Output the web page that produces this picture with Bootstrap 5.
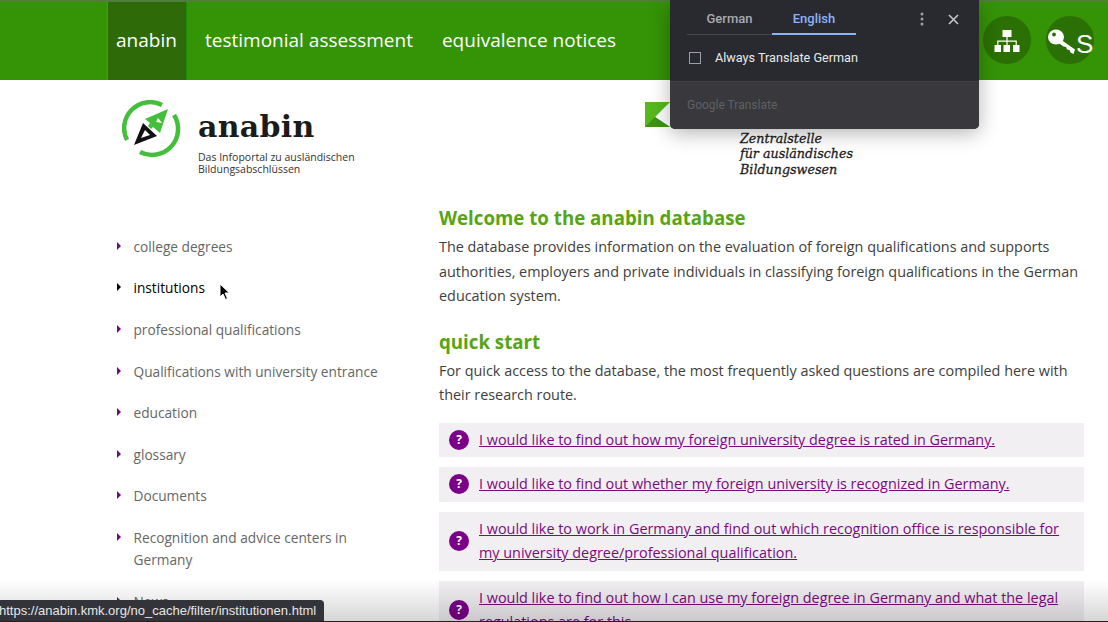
<!DOCTYPE html>
<html lang="en">
<head>
  <meta charset="UTF-8">
  <title>anabin</title>
  <link href="https://cdn.jsdelivr.net/npm/bootstrap@5.3.3/dist/css/bootstrap.min.css" rel="stylesheet">
  <style>
    html, body { height: 622px; overflow: hidden; }
    body { font-family: "Open Sans", sans-serif; font-size: 14.4px; color: #404040; position: relative; }

    .top-bar { height: 80px; background: #359306; border-top: 2px solid #4f7f3a; padding-left: 107px; }
    .top-link { color: #fff; font-size: 19px; text-decoration: none; padding: 0 9px 2px; height: 78px; display: flex; align-items: center; margin-right: 11px; }
    .top-link.active-link { background: #2f6a08; border-left: 1px solid #4c9a22; border-right: 1px solid #1f8a10; width: 80px; margin-right: 9px; padding: 0 8px 2px; }
    .round-btn { width: 48px; height: 48px; border-radius: 50%; background: #2b7005; }
    .round-wrap { position: absolute; top: 16px; left: 983px; gap: 15px; }
    .tree-icon { margin-top: 2px; }
    .key-icon { overflow: visible; }

    .logo-row { height: 126px; padding-left: 122px; }
    .compass-logo { margin: 20px 16px 0 0; flex: none; }
    .logo-words { margin-top: 32px; }
    .anabin-word { font-family: "DejaVu Serif", serif; font-weight: 700; font-size: 30px; line-height: 30px; color: #1b1b1b; letter-spacing: .3px; }
    .anabin-sub { font-size: 10.5px; line-height: 12px; color: #333; margin-top: 9px; }
    .kmk-logo { position: absolute; left: 645px; top: 102px; }
    .kmk-text { position: absolute; left: 740px; top: 130.5px; font-family: "DejaVu Serif", serif; font-style: italic; font-size: 12.7px; line-height: 15.8px; color: #1c1c1c; white-space: nowrap; -webkit-text-stroke: .3px #1c1c1c; }

    .page-body { padding-left: 117px; padding-right: 24px; }
    .side-col { width: 322px; flex: none; padding-top: 29.9px; }
    .side-item { display: flex; margin-bottom: 19.6px; line-height: 22px; font-size: 13.7px; color: #666; padding-right: 35px; }
    .side-arrow { width: 0; height: 0; flex: none; margin: 6px 12.500px 0 0; border-left: 4px solid #6b0d78; border-top: 4px solid transparent; border-bottom: 4px solid transparent; }
    .side-item.is-hover { color: #000; }
    .side-item.is-hover .side-arrow { border-left-color: #000; }

    .main-col { flex: 1; min-width: 0; }
    .main-col h2 { color: #56a513; font-size: 18.7px; font-weight: 700; line-height: 24px; margin: 0 0 5px; }
    .main-col p { line-height: 24.5px; margin: 0; }
    .main-col h2.quick-title { margin: 21px 0 5px; }
    .ask-row { background: #f1eff2; padding: 5px 10px; margin-top: 10px; line-height: 24.5px; gap: 10px; }
    .ask-row.ask-first { margin-top: 15px; }
    .ask-row a { color: #7b0a80; }
    .ask-mark { width: 20px; height: 20px; flex: none; border-radius: 50%; background: #7b0088; color: #fff; font-size: 12px; font-weight: 700; line-height: 20px; text-align: center; }

    .shade-bottom { position: absolute; left: 0; right: 0; bottom: 0; height: 42px; background: linear-gradient(rgba(0,0,0,0), rgba(0,0,0,.16)); border-bottom: 1px solid #222; }
    .status-tip { position: absolute; left: 0; bottom: 1px; height: 21px; width: 324px; background: #33343a; color: #e6e6e8; font-family: "Liberation Sans", sans-serif; font-size: 13px; line-height: 21px; white-space: nowrap; border-top-right-radius: 4px; overflow: hidden; text-indent: -1px; }
    .mouse-arrow { position: absolute; left: 219px; top: 283px; }

    .translate-pop { position: absolute; left: 670px; top: 0; width: 309px; height: 129px; background: #292a2f; border-radius: 0 0 5px 5px; box-shadow: 0 4px 20px rgba(0,0,0,.3); font-family: Roboto, sans-serif; font-size: 13px; }
    .lang-row { height: 35px; padding-left: 17px; }
    .lang-tab { height: 35px; line-height: 37px; text-align: center; color: #a8aab0; font-weight: 500; border-bottom: 1px solid #46474c; }
    .lang-tab.lang-on { color: #8ab4f8; border-bottom: 2px solid #8ab4f8; }
    .pop-tools { position: absolute; top: 12px; right: 20px; gap: 24px; }
    .always-row { height: 46px; padding-left: 19px; color: #e8eaed; gap: 14px; font-size: 12.65px; }
    .fake-check { width: 12px; height: 12px; border: 1.5px solid #9aa0a6; flex: none; }
    .pop-foot { height: 48px; background: #38383d; border-top: 1px solid #424347; color: #5f6166; border-radius: 0 0 5px 5px; padding: 0 0 2px 17px; display: flex; align-items: center; font-size: 12px; }
  </style>
</head>
<body>

  <div class="top-bar d-flex">
    <a class="top-link active-link" href="#">anabin</a>
    <a class="top-link" href="#">testimonial assessment</a>
    <a class="top-link" href="#">equivalence notices</a>
  </div>

  <div class="round-wrap d-flex">
    <div class="round-btn d-flex align-items-center justify-content-center">
      <svg class="tree-icon" width="26" height="22" viewBox="0 0 26 22" fill="#fff">
        <rect x="8.500" y="0" width="9" height="7"/>
        <rect x="0.500" y="15" width="6.500" height="7"/><rect x="9.500" y="15" width="6.500" height="7"/><rect x="19" y="15" width="6.500" height="7"/>
        <path d="M12.400 7h1.200v3.500h9.200v4.500h-1.200v-3.300h-8v3.300h-1.200v-3.300h-8v3.300H3.200v-4.500h9.200z"/>
      </svg>
    </div>
    <div class="round-btn">
      <svg class="key-icon" width="48" height="48" viewBox="0 0 48 48">
        <ellipse cx="10" cy="21" rx="8" ry="7.500" fill="#fff"/>
        <circle cx="8" cy="18.500" r="1.900" fill="#2b7005"/>
        <path d="M14 23l15 10.500-1.500 4.500-3-1.500-1-2.500-2.500-.5-1-2.500-2.500-.5-7-5z" fill="#fff"/>
        <text x="30" y="37" font-family="Liberation Sans, sans-serif" font-size="26" fill="#fff">S</text>
      </svg>
    </div>
  </div>

  <div class="logo-row d-flex align-items-start">
    <svg class="compass-logo" width="60" height="60" viewBox="0 0 60 60">
      <path d="M5 40A26 26 0 0 1 40 5" fill="none" stroke="#44bf3c" stroke-width="4.500"/>
      <path d="M52 15A26 26 0 0 1 18 52" fill="none" stroke="#44bf3c" stroke-width="4.500"/>
      <path d="M46 9L38 33 31 27 29 29 26 26 28 23 23 19z" fill="#44bf3c"/>
      <path d="M36 18l4 5-6-1z" fill="#fff"/>
      <path d="M12 45L21 23 35 36z" fill="#111"/>
      <path d="M23 30l5 5-9 3z" fill="#fff"/>
    </svg>
    <div class="logo-words">
      <div class="anabin-word">anabin</div>
      <div class="anabin-sub">Das Infoportal zu ausländischen<br>Bildungsabschlüssen</div>
    </div>
  </div>

  <svg class="kmk-logo" width="25" height="25" viewBox="0 0 25 25">
    <path d="M0 0h25L10 15l15 10H0z" fill="#55b91e"/>
    <path d="M0 25L10 15l15 10z" fill="#3c9412"/>
  </svg>
  <div class="kmk-text">Zentralstelle<br>für ausländisches<br>Bildungswesen</div>

  <div class="page-body d-flex">
    <div class="side-col">
      <div class="side-item"><span class="side-arrow"></span><span>college degrees</span></div>
      <div class="side-item is-hover"><span class="side-arrow"></span><span>institutions</span></div>
      <div class="side-item"><span class="side-arrow"></span><span>professional qualifications</span></div>
      <div class="side-item"><span class="side-arrow"></span><span>Qualifications with university entrance</span></div>
      <div class="side-item"><span class="side-arrow"></span><span>education</span></div>
      <div class="side-item"><span class="side-arrow"></span><span>glossary</span></div>
      <div class="side-item"><span class="side-arrow"></span><span>Documents</span></div>
      <div class="side-item"><span class="side-arrow"></span><span>Recognition and advice centers in Germany</span></div>
      <div class="side-item"><span class="side-arrow"></span><span>News</span></div>
    </div>
    <div class="main-col">
      <h2>Welcome to the anabin database</h2>
      <p>The database provides information on the evaluation of foreign qualifications and supports authorities, employers and private individuals in classifying foreign qualifications in the German education system.</p>
      <h2 class="quick-title">quick start</h2>
      <p>For quick access to the database, the most frequently asked questions are compiled here with their research route.</p>
      <div class="ask-row ask-first d-flex align-items-center"><span class="ask-mark">?</span><a href="#">I would like to find out how my foreign university degree is rated in Germany.</a></div>
      <div class="ask-row d-flex align-items-center"><span class="ask-mark">?</span><a href="#">I would like to find out whether my foreign university is recognized in Germany.</a></div>
      <div class="ask-row d-flex align-items-center"><span class="ask-mark">?</span><a href="#">I would like to work in Germany and find out which recognition office is responsible for my university degree/professional qualification.</a></div>
      <div class="ask-row d-flex align-items-center"><span class="ask-mark">?</span><a href="#">I would like to find out how I can use my foreign degree in Germany and what the legal regulations are for this.</a></div>
    </div>
  </div>

  <div class="shade-bottom"></div>
  <div class="status-tip">https://anabin.kmk.org/no_cache/filter/institutionen.html</div>

  <svg class="mouse-arrow" width="12" height="18" viewBox="0 0 12 18">
    <path d="M1 1v13l3-3 2.500 5.500 2-1L6 10h4.500z" fill="#000" stroke="#fff" stroke-width="1"/>
  </svg>

  <div class="translate-pop">
    <div class="lang-row d-flex">
      <div class="lang-tab" style="width:85px">German</div>
      <div class="lang-tab lang-on" style="width:84px">English</div>
    </div>
    <div class="pop-tools d-flex align-items-center">
      <svg width="4" height="14" viewBox="0 0 4 14" fill="#9aa0a6"><circle cx="2" cy="2" r="1.500"/><circle cx="2" cy="7" r="1.500"/><circle cx="2" cy="12" r="1.500"/></svg>
      <svg width="11" height="11" viewBox="0 0 11 11" stroke="#c4c7cc" stroke-width="1.600"><path d="M1 1l9 9M10 1l-9 9"/></svg>
    </div>
    <div class="always-row d-flex align-items-center"><span class="fake-check"></span><span>Always Translate German</span></div>
    <div class="pop-foot">Google Translate</div>
  </div>

</body>
</html>
